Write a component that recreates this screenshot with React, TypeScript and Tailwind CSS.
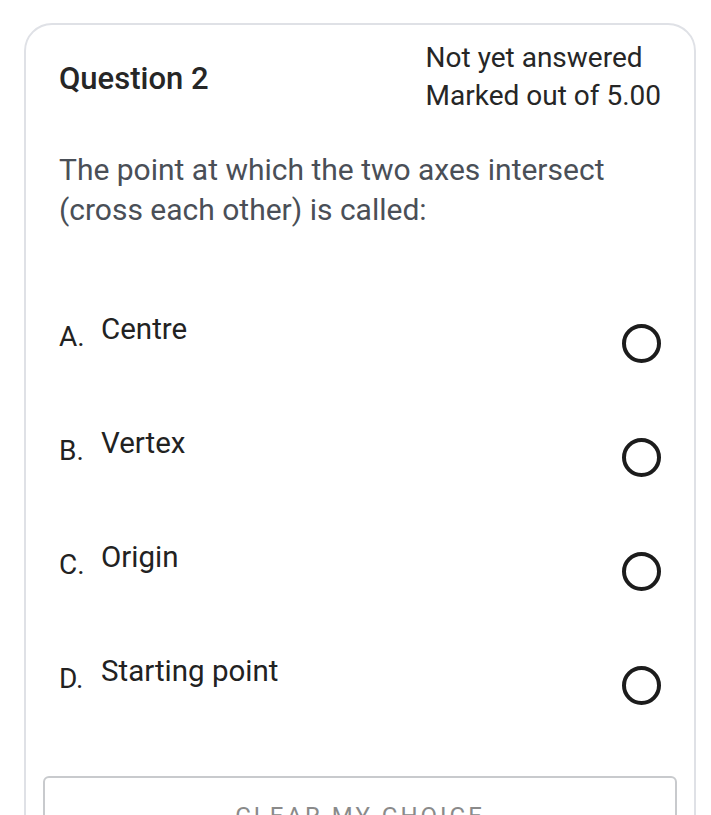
const options = [
  { label: 'A.', text: 'Centre' },
  { label: 'B.', text: 'Vertex' },
  { label: 'C.', text: 'Origin' },
  { label: 'D.', text: 'Starting point' },
];

export default function App() {
  return (
    <div className="h-[815px] overflow-hidden bg-white pl-[24px] pr-[15px] pt-[23px] font-['Roboto',sans-serif]">
      <div className="h-[900px] rounded-[28px] border-2 border-[#dfe1e6] px-[33px] pt-[14px]">
        {/* Header */}
        <div className="flex items-center justify-between">
          <h2 className="mt-[5px] text-[31px] font-medium text-[#262626]">Question 2</h2>
          <div className="text-[28px] leading-[38px] text-[#262626]">
            <div>Not yet answered</div>
            <div>Marked out of 5.00</div>
          </div>
        </div>

        {/* Question text */}
        <p className="mt-[35px] text-[30px] leading-[40px] text-[#4a4f57]">
          The point at which the two axes intersect (cross each other) is called:
        </p>

        {/* Options */}
        <div className="mt-[83px]">
          {options.map((o) => (
            <div key={o.label} className="flex h-[114px] items-start justify-between">
              <div className="flex items-start">
                <span className="mt-[8px] w-[42px] text-[28px] leading-[32px] text-[#222222]">{o.label}</span>
                <span className="text-[29.5px] leading-[32px] text-[#222222]">{o.text}</span>
              </div>
              <div className="mt-[11px] h-[39px] w-[39px] rounded-full border-[4px] border-[#1c1c1c]" />
            </div>
          ))}
        </div>

        {/* Clear button */}
        <button className="-mx-[16px] mt-[7px] flex h-[70px] w-[calc(100%+32px)] items-center justify-center rounded-[6px] border-2 border-[#c8cacd] pt-[10px] text-[24px] uppercase tracking-[3px] text-[#8a8a8a]">
          Clear my choice
        </button>
      </div>
    </div>
  );
}
